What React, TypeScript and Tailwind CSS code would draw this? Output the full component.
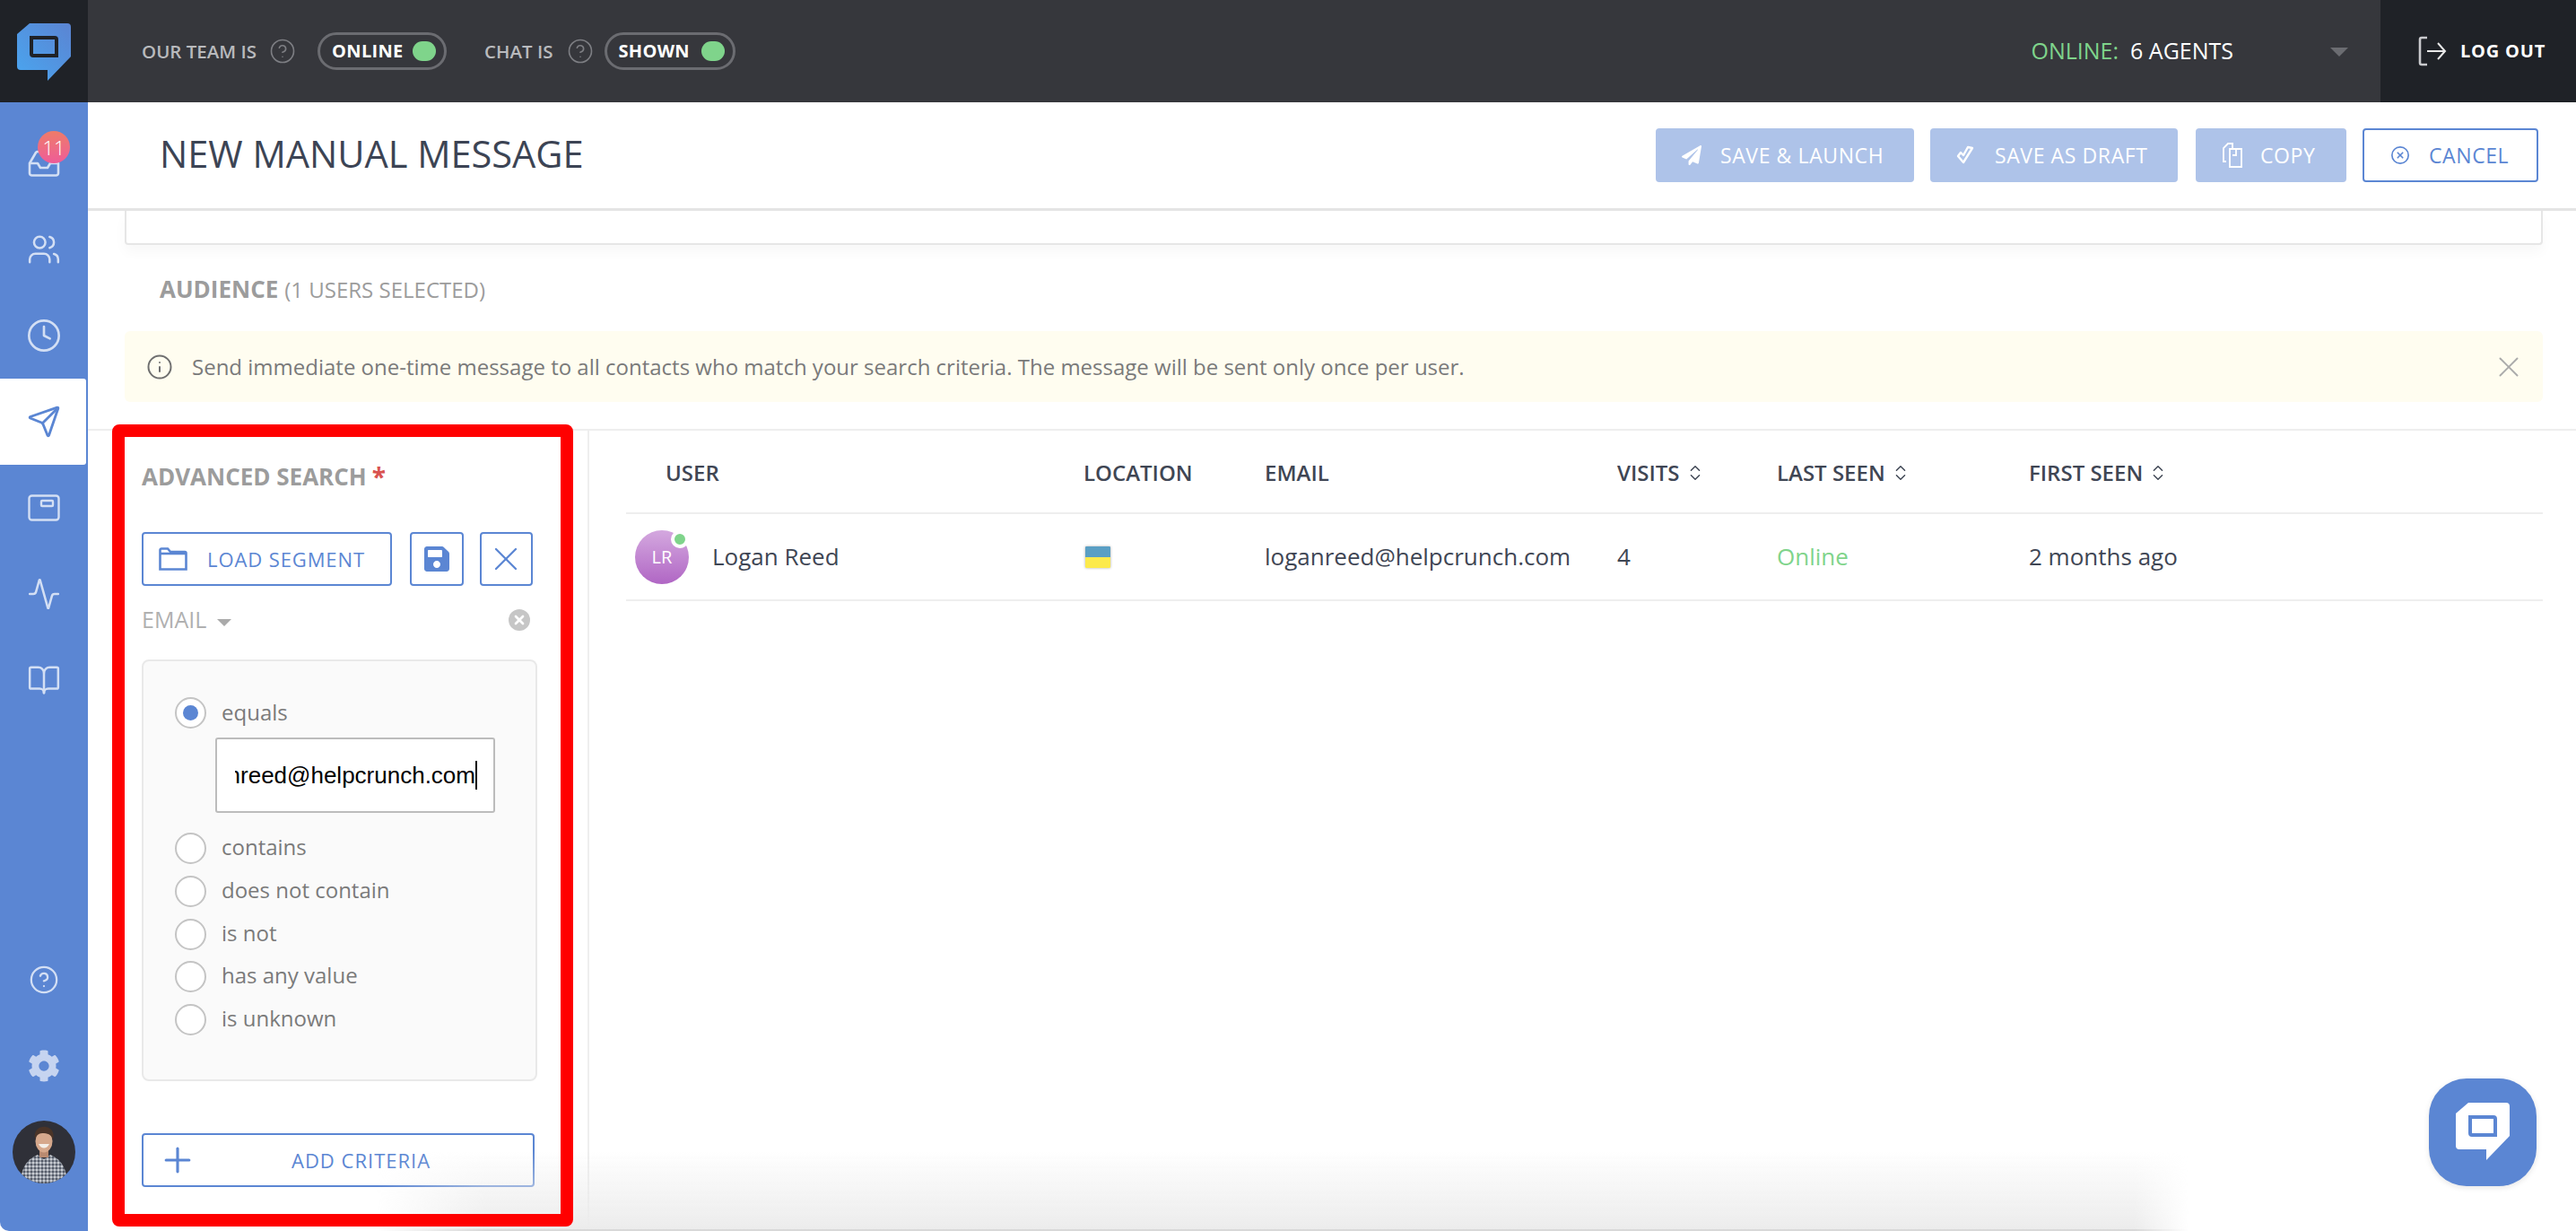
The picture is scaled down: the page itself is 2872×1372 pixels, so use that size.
import {
  Activity,
  BookOpen,
  ChevronsUpDown,
  CircleHelp,
  CircleX,
  Clock,
  Info,
  Plus,
  Send,
  Users,
  X,
} from "lucide-react";
import { FaCog, FaPaperPlane, FaSave } from "react-icons/fa";

const sans = "[font-family:'Open_Sans',sans-serif]";

function Bubble({ fill, inner }: { fill: string; inner: string }) {
  return (
    <svg width="60" height="64" viewBox="0 0 60 64">
      <path
        d="M14 0H56a4 4 0 0 1 4 4V37L34 64V52H4a4 4 0 0 1-4-4V12Z"
        fill={fill}
      />
      <path d="M16 16H42a2 2 0 0 1 2 2V36H18a2 2 0 0 1-2-2Z" fill="none" stroke={inner} strokeWidth="4" />
    </svg>
  );
}

function RailItem({
  children,
  active,
  className = "",
}: {
  children: React.ReactNode;
  active?: boolean;
  className?: string;
}) {
  return (
    <div
      className={`relative flex h-[96px] items-center justify-center ${
        active ? "mr-[2px] rounded-r-[3px] bg-white pl-[2px] text-[#5b86d3]" : "text-[#d3dff4]"
      } ${className}`}
    >
      {children}
    </div>
  );
}

function Avatar() {
  return (
    <svg width="70" height="70" viewBox="0 0 70 70" className="rounded-full blur-[0.4px]">
      <defs>
        <pattern id="plaid" width="4" height="4" patternUnits="userSpaceOnUse">
          <rect width="4" height="4" fill="#8f95a0" />
          <rect width="2" height="2" fill="#555b68" />
          <rect x="2" y="2" width="2" height="2" fill="#c9ccd2" />
        </pattern>
      </defs>
      <rect width="70" height="70" fill="#2f3038" />
      <path d="M9 70C10 50 17 43 28 38L35 43L42 38C53 43 60 50 61 70Z" fill="url(#plaid)" />
      <rect x="30" y="31" width="10" height="10" fill="#b98a70" />
      <ellipse cx="35" cy="23" rx="9.5" ry="12.5" fill="#d6a88c" />
      <path d="M25 21C23 10 31 6 37 7C44 8 47 14 45 21C43 15 39 14 33 14C29 14 26 17 25 21Z" fill="#4a3428" />
      <path d="M29 26C32 32 38 32 41 26Z" fill="#f4efe9" />
    </svg>
  );
}

function TopPill({ label, width }: { label: string; width: string }) {
  return (
    <div
      className={`flex h-[42px] items-center justify-between rounded-full border-[3px] border-[#6b6c71] pl-[13px] pr-[9px] ${width}`}
    >
      <span className="text-[20px] font-bold tracking-[0.3px] text-white">{label}</span>
      <span className="h-[22px] w-[26px] rounded-full bg-[#7fd48b]" />
    </div>
  );
}

function HeadButton({
  children,
  label,
  width,
  outline,
}: {
  children: React.ReactNode;
  label: string;
  width: string;
  outline?: boolean;
}) {
  return (
    <div
      className={`flex h-[60px] items-center rounded-[4px] pl-[29px] ${width} ${
        outline ? "border-2 border-[#5b86d3] text-[#5b86d3]" : "bg-[#aec3e9] text-white"
      }`}
    >
      <span className="flex w-[43px] shrink-0 items-center">{children}</span>
      <span className="whitespace-nowrap text-[23px] tracking-[0.6px]">{label}</span>
    </div>
  );
}

function Radio({ label, checked, className = "" }: { label: string; checked?: boolean; className?: string }) {
  return (
    <div className={`flex h-[36px] items-center ${className}`}>
      <span className="flex h-[35px] w-[35px] shrink-0 items-center justify-center rounded-full border-2 border-[#c4c4c4] bg-white">
        {checked && <span className="h-[17px] w-[17px] rounded-full bg-[#5b86d3]" />}
      </span>
      <span className={`ml-[17px] text-[24px] leading-none text-[#7a7a7a] ${checked ? "" : "pb-[3px]"}`}>{label}</span>
    </div>
  );
}

function SortHead({ label }: { label: string }) {
  return (
    <span className="flex items-center gap-[6px]">
      {label}
      <ChevronsUpDown className="h-[22px] w-[22px]" strokeWidth={1.6} />
    </span>
  );
}

export default function App() {
  return (
    <div className={`relative flex h-[1372px] w-[2872px] overflow-hidden bg-white ${sans}`}>
      {/* left rail */}
      <aside className="flex w-[98px] shrink-0 flex-col rounded-bl-[10px] bg-[#5b86d3]">
        <div className="flex h-[114px] items-start justify-center bg-[#1f2227] pt-[26px]">
          <svg width="60" height="64" viewBox="0 0 60 64">
            <defs>
              <linearGradient id="logo" x1="0" y1="1" x2="1" y2="0">
                <stop offset="0" stopColor="#49a6f0" />
                <stop offset="1" stopColor="#5b84d2" />
              </linearGradient>
            </defs>
            <path d="M14 0H56a4 4 0 0 1 4 4V37L34 64V52H4a4 4 0 0 1-4-4V12Z" fill="url(#logo)" />
            <path d="M16 16H42a2 2 0 0 1 2 2V36H18a2 2 0 0 1-2-2Z" fill="none" stroke="#1f2227" strokeWidth="4" />
          </svg>
        </div>
        <nav className="flex flex-1 flex-col pt-[20px]">
          <RailItem>
            <svg width="36" height="30" viewBox="0 0 36 30" fill="none" stroke="currentColor" strokeWidth="2.6" strokeLinejoin="round">
              <path d="M2 15L9 3a2 2 0 0 1 2-1H25a2 2 0 0 1 2 1L34 15V26a2.5 2.5 0 0 1-2.5 2.5H4.5A2.5 2.5 0 0 1 2 26Z" />
              <path d="M2 15H11L14 20H22L25 15H34" />
            </svg>
            <span className="absolute left-[42px] top-[12px] flex h-[36px] w-[36px] items-center justify-center rounded-full bg-gradient-to-b from-[#ee7b68] to-[#ee5b98] text-[22px] font-light text-white">
              11
            </span>
          </RailItem>
          <RailItem>
            <Users className="h-[38px] w-[38px]" strokeWidth={1.6} />
          </RailItem>
          <RailItem>
            <Clock className="h-[40px] w-[40px]" strokeWidth={1.6} />
          </RailItem>
          <RailItem active>
            <Send className="h-[38px] w-[38px]" strokeWidth={1.8} />
          </RailItem>
          <RailItem>
            <svg width="36" height="30" viewBox="0 0 36 30" fill="none" stroke="currentColor" strokeWidth="2.4">
              <rect x="1.5" y="1.5" width="33" height="27" rx="3" />
              <rect x="15" y="7" width="13" height="6" rx="1" />
            </svg>
          </RailItem>
          <RailItem>
            <Activity className="h-[38px] w-[38px]" strokeWidth={1.6} />
          </RailItem>
          <RailItem>
            <BookOpen className="h-[38px] w-[38px]" strokeWidth={1.6} />
          </RailItem>
          <div className="mt-auto pb-[40px]">
            <RailItem>
              <CircleHelp className="h-[34px] w-[34px]" strokeWidth={1.6} />
            </RailItem>
            <RailItem>
              <FaCog className="h-[36px] w-[36px] text-[#c6d4f0]" />
            </RailItem>
            <RailItem>
              <Avatar />
            </RailItem>
          </div>
        </nav>
      </aside>

      <div className="flex min-w-0 flex-1 flex-col">
        {/* top bar */}
        <header className="flex h-[114px] shrink-0 items-center bg-[#36373c] pl-[60px]">
          <span className="text-[20.5px] font-semibold text-[#b9babd]">OUR TEAM IS</span>
          <CircleHelp className="ml-[14px] h-[30px] w-[30px] text-[#7d7e83]" strokeWidth={1.3} />
          <TopPill label="ONLINE" width="ml-[24px] w-[144px]" />
          <span className="ml-[42px] text-[20.5px] font-semibold text-[#b9babd]">CHAT IS</span>
          <CircleHelp className="ml-[15px] h-[30px] w-[30px] text-[#7d7e83]" strokeWidth={1.3} />
          <TopPill label="SHOWN" width="ml-[12px] w-[146px]" />
          <span className="ml-auto text-[25px] text-[#7fd48b]">ONLINE:</span>
          <span className="ml-[13px] text-[25px] text-white">6 AGENTS</span>
          <span className="ml-[108px] mr-[36px] mt-[2px] h-0 w-0 border-x-[10px] border-t-[10px] border-x-transparent border-t-[#6b6c71]" />
          <div className="flex h-full w-[218px] items-center bg-[#1f2227] pl-[42px]">
            <svg width="32" height="34" viewBox="0 0 32 34" fill="none" stroke="#c9cacd" strokeWidth="2">
              <path d="M10 2H4a2 2 0 0 0-2 2V30a2 2 0 0 0 2 2H10" strokeWidth="2.6" />
              <path d="M10 17H30M22 8L30 17L22 26" stroke="#e8e8e8" />
            </svg>
            <span className="ml-[15px] whitespace-nowrap text-[20px] font-bold tracking-[0.8px] text-white">LOG OUT</span>
          </div>
        </header>

        {/* page head */}
        <div className="relative z-10 flex h-[121px] shrink-0 items-center justify-between border-b-[3px] border-[#e4e4e4] bg-white pl-[80px] pr-[42px]">
          <h1 className="mb-[3px] whitespace-nowrap text-[41.5px] font-normal text-[#3c4454]">NEW MANUAL MESSAGE</h1>
          <div className="flex items-center">
            <HeadButton label="SAVE & LAUNCH" width="w-[288px]">
              <FaPaperPlane className="h-[22px] w-[22px]" />
            </HeadButton>
            <HeadButton label="SAVE AS DRAFT" width="ml-[18px] w-[276px]">
              <svg width="20" height="22" viewBox="0 0 20 22" fill="none" stroke="currentColor" strokeWidth="2.4" strokeLinejoin="round">
                <path d="M2 12L8 19L18 3L13 2L8 11L5 8Z" />
              </svg>
            </HeadButton>
            <HeadButton label="COPY" width="ml-[20px] w-[168px] !pl-[29px]">
              <svg width="24" height="30" viewBox="0 0 24 30" fill="none" stroke="currentColor" strokeWidth="1.8">
                <path d="M5 22H2V7L7 2H12V8" />
                <path d="M9 8H22V28H9Z" />
                <path d="M16 8V15H12" />
              </svg>
            </HeadButton>
            <HeadButton label="CANCEL" width="ml-[18px] w-[196px]" outline>
              <CircleX className="h-[22px] w-[22px]" strokeWidth={1.8} />
            </HeadButton>
          </div>
        </div>

        {/* rest of the card above, scrolled under the head */}
        <div className="ml-[41px] mr-[37px] h-[38px] shrink-0 rounded-b-[4px] border-2 border-t-0 border-[#e6e6e6] shadow-[0_8px_14px_rgba(0,0,0,0.03)]" />

        <div className="flex h-[96px] shrink-0 items-center pl-[80px] pt-[3px] text-[24px] text-[#9c9c9c]">
          <b className="text-[26px] font-bold">AUDIENCE</b>
          <span className="ml-[7px]">(1 USERS SELECTED)</span>
        </div>

        <div className="ml-[41px] mr-[37px] flex h-[79px] shrink-0 items-center rounded-[6px] bg-[#fffdf0] pl-[24px] pr-[19px]">
          <Info className="h-[30px] w-[30px] text-[#6f6f6f]" strokeWidth={1.6} />
          <span className="ml-[21px] text-[24px] text-[#7a7a7a]">
            Send immediate one-time message to all contacts who match your search criteria. The message will be sent only once per user.
          </span>
          <X className="ml-auto h-[38px] w-[38px] text-[#aaaaaa]" strokeWidth={1.2} />
        </div>

        <div className="mt-[30px] flex min-h-0 flex-1 border-t-2 border-[#eeeeee]">
          {/* advanced search */}
          <section className="w-[559px] shrink-0 border-r-2 border-[#eeeeee] pl-[60px] pr-[61px]">
            <h2 className="mt-[33px] flex h-[36px] items-center text-[26px] font-bold text-[#9c9c9c]">
              ADVANCED SEARCH
              <span className="ml-[6px] text-[28px] text-[#d9534f]">*</span>
            </h2>
            <div className="mt-[44px] flex">
              <div className="flex h-[60px] w-[282px] items-center rounded-[4px] border-2 border-[#5b86d3] pl-[17px] text-[#5b86d3]">
                <svg width="32" height="26" viewBox="0 0 32 26" fill="none" stroke="currentColor" strokeWidth="2.6">
                  <path d="M1.5 24.5V3a1.5 1.5 0 0 1 1.5-1.5H10L13 5H29a1.5 1.5 0 0 1 1.5 1.5V24.5Z" />
                  <path d="M1.5 7H30" />
                </svg>
                <span className="ml-[22px] whitespace-nowrap text-[22px] tracking-[0.9px]">LOAD SEGMENT</span>
              </div>
              <div className="ml-[20px] flex h-[60px] w-[60px] items-center justify-center rounded-[4px] border-2 border-[#5b86d3] text-[#5b86d3]">
                <FaSave className="h-[32px] w-[32px]" />
              </div>
              <div className="ml-[18px] flex h-[60px] w-[60px] items-center justify-center rounded-[4px] border-2 border-[#5b86d3] text-[#5b86d3]">
                <X className="h-[44px] w-[44px]" strokeWidth={1.3} />
              </div>
            </div>
            <div className="mt-[20px] flex h-[36px] items-center pr-[3px]">
              <span className="text-[25px] text-[#b0b0b0]">EMAIL</span>
              <span className="ml-[12px] mt-[6px] h-0 w-0 border-x-[8px] border-t-[8px] border-x-transparent border-t-[#aaaaaa]" />
              <span className="ml-auto flex h-[24px] w-[24px] items-center justify-center rounded-full bg-[#c6c6c6]">
                <X className="h-[16px] w-[16px] text-white" strokeWidth={4} />
              </span>
            </div>
            <div className="mt-[26px] h-[470px] w-[441px] rounded-[8px] border-2 border-[#e9e9e9] bg-[#fafafa] pl-[35px] pt-[39px]">
              <Radio label="equals" checked />
              <div className="ml-[45px] mt-[10px] flex h-[84px] w-[312px] items-center rounded-[3px] border-2 border-[#bcbcbc] bg-white pl-[20px] pr-[18px] [font-family:'Liberation_Sans',sans-serif]">
                <div className="flex min-w-0 flex-1 items-center justify-end overflow-hidden">
                  <span className="whitespace-nowrap text-[26px] text-black">loganreed@helpcrunch.com</span>
                  <span className="h-[32px] w-[2px] shrink-0 bg-black" />
                </div>
              </div>
              <Radio label="contains" className="mt-[21px]" />
              <Radio label="does not contain" className="mt-[12px]" />
              <Radio label="is not" className="mt-[12px]" />
              <Radio label="has any value" className="mt-[11px]" />
              <Radio label="is unknown" className="mt-[12px]" />
            </div>
            <div className="mt-[58px] flex h-[60px] w-[438px] items-center rounded-[4px] border-2 border-[#5b86d3] text-[#5b86d3]">
              <Plus className="ml-[16px] h-[44px] w-[44px]" strokeWidth={1.7} />
              <span className="ml-[105px] whitespace-nowrap text-[22px] tracking-[1px]">ADD CRITERIA</span>
            </div>
          </section>

          {/* results table */}
          <section className="ml-[41px] mr-[37px] min-w-0 flex-1 text-[#3f4654]">
            <div className="grid h-[93px] grid-cols-[510px_202px_393px_178px_281px_1fr] items-center border-b-2 border-[#eeeeee] pt-[2px] text-[24px] font-semibold">
              <span className="pl-[44px]">USER</span>
              <span>LOCATION</span>
              <span>EMAIL</span>
              <SortHead label="VISITS" />
              <SortHead label="LAST SEEN" />
              <SortHead label="FIRST SEEN" />
            </div>
            <div className="grid h-[97px] grid-cols-[510px_202px_393px_178px_281px_1fr] items-center border-b-2 border-[#eeeeee] text-[26px]">
              <span className="flex items-center pl-[10px]">
                <span className="relative flex h-[60px] w-[60px] items-center justify-center rounded-full bg-gradient-to-b from-[#d4a8df] to-[#b066c4] text-[20px] text-white">
                  LR
                  <span className="absolute right-0 top-0 box-content h-[12px] w-[12px] rounded-full border-[4px] border-white bg-[#7fd48b]" />
                </span>
                <span className="ml-[26px]">Logan Reed</span>
              </span>
              <span className="flex">
                <span className="ml-[2px] flex h-[24px] w-[28px] flex-col overflow-hidden rounded-[1px] shadow-[0_0_3px_rgba(0,0,0,0.35)] blur-[0.5px]">
                  <span className="h-1/2 bg-[#5a9fc4]" />
                  <span className="h-1/2 bg-[#fcea4c]" />
                </span>
              </span>
              <span>loganreed@helpcrunch.com</span>
              <span>4</span>
              <span className="text-[#7fd48b]">Online</span>
              <span>2 months ago</span>
            </div>
          </section>
        </div>
      </div>

      {/* soft shade along the bottom edge */}
      <div className="pointer-events-none absolute bottom-0 left-[420px] h-[90px] w-[2020px] border-b-2 border-[#d8d8d8] bg-gradient-to-b from-transparent to-[#ececec] [mask-image:linear-gradient(90deg,transparent,black_6%,black_97%,transparent)]" />

      {/* chat launcher */}
      <div className="absolute left-[2708px] top-[1202px] flex h-[120px] w-[120px] items-center justify-center rounded-[42px] bg-[#5b86d3] pb-[2px] shadow-[0_2px_6px_rgba(0,0,0,0.1)]">
        <Bubble fill="#ffffff" inner="#5b86d3" />
      </div>

      {/* red annotation frame */}
      <div className="pointer-events-none absolute left-[125px] top-[473px] h-[894px] w-[514px] rounded-[8px] border-[14px] border-[#ff0000]" />
    </div>
  );
}
